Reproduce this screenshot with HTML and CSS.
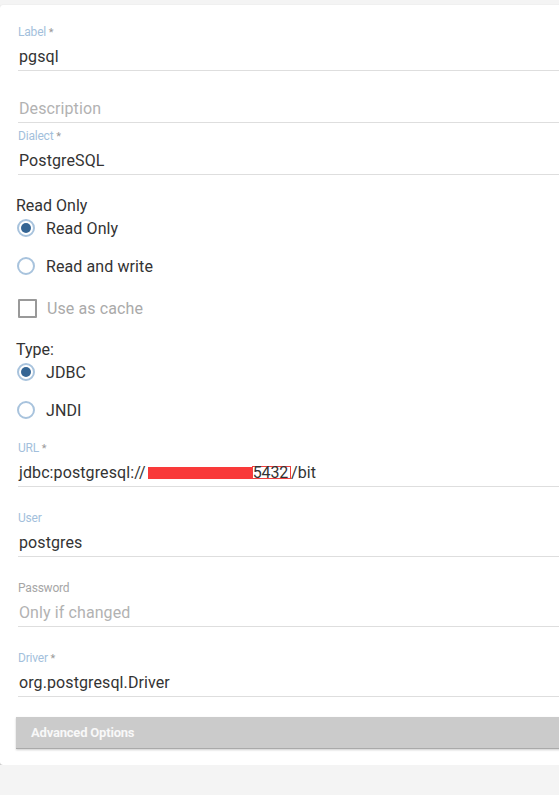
FILE: index.html
```html
<!DOCTYPE html>
<html>
<head>
<meta charset="utf-8">
<link rel="stylesheet" href="styles.css">
</head>
<body>
<div class="card">
  <div class="field">
    <div class="flabel">Label <span class="req">*</span></div>
    <div class="fvalue">pgsql</div>
  </div>
  <div class="field">
    <div class="flabel"></div>
    <div class="fvalue placeholder">Description</div>
  </div>
  <div class="field">
    <div class="flabel">Dialect <span class="req">*</span></div>
    <div class="fvalue">PostgreSQL</div>
  </div>

  <div class="group first">
    <div class="ghead">Read Only</div>
    <div class="radio-row"><span class="radio checked"></span><span class="rtext">Read Only</span></div>
    <div class="radio-row"><span class="radio"></span><span class="rtext">Read and write</span></div>
  </div>
  <div class="check-row"><span class="checkbox"></span><span class="ctext">Use as cache</span></div>

  <div class="group second">
    <div class="ghead">Type:</div>
    <div class="radio-row"><span class="radio checked"></span><span class="rtext">JDBC</span></div>
    <div class="radio-row"><span class="radio"></span><span class="rtext">JNDI</span></div>
  </div>

  <div class="field spaced url">
    <div class="flabel">URL <span class="req">*</span></div>
    <div class="fvalue">jdbc:postgresql://<span class="redact"></span><span class="port">5432</span>/bit</div>
  </div>
  <div class="field spaced">
    <div class="flabel">User</div>
    <div class="fvalue">postgres</div>
  </div>
  <div class="field spaced">
    <div class="flabel grey">Password</div>
    <div class="fvalue placeholder">Only if changed</div>
  </div>
  <div class="field spaced">
    <div class="flabel">Driver <span class="req">*</span></div>
    <div class="fvalue">org.postgresql.Driver</div>
  </div>

  <div class="advanced">Advanced Options</div>
</div>
</body>
</html>
```
FILE: styles.css
```css
html, body {
  margin: 0;
  padding: 0;
  background: #f4f4f4;
  overflow: hidden;
  font-family: Roboto, "Liberation Sans", sans-serif;
}
.card {
  margin-top: 5px;
  width: 600px;
  background: #fff;
  border-radius: 3px;
  box-shadow: 0 1px 2px rgba(0,0,0,0.35);
  padding: 14px 0 16px 16px;
  box-sizing: border-box;
}
.field {
  margin-left: 2px;
  padding-top: 6px;
  border-bottom: 1px solid #dedede;
}
.field.spaced { margin-top: 18px; }
.field.url { margin-top: 13px; }
.flabel {
  height: 14px;
  line-height: 14px;
  font-size: 12px;
  color: #a3bfdc;
  margin-bottom: 4px;
  letter-spacing: -0.2px;
}
.flabel.grey { color: #a6a6a6; }
.req { color: #9a9a9a; font-size: 11px; }
.fvalue {
  height: 27px;
  line-height: 27px;
  font-size: 16px;
  color: #333;
  padding-left: 1px;
  letter-spacing: 0.1px;
}
.fvalue.placeholder { color: #b2b2b2; }
.redact {
  display: inline-block;
  width: 104px;
  height: 12px;
  background: #f93a3a;
  vertical-align: -1px;
  margin-left: 2px;
}
.port {
  display: inline-block;
  border: 1px solid #f04040;
  line-height: 12px;
  height: 11px;
  padding-right: 2px;
  letter-spacing: -0.2px;
}
.group.first { margin-top: 21px; }
.group.second { margin-top: 20px; }
.ghead {
  height: 20px;
  line-height: 20px;
  font-size: 16px;
  color: #333;
}
.radio-row {
  display: flex;
  align-items: center;
  height: 24px;
  margin-bottom: 14px;
}
.radio-row:last-child { margin-bottom: 0; }
.radio {
  width: 14px;
  height: 14px;
  border: 2px solid #a8c3dd;
  border-radius: 50%;
  margin-left: 1px;
  position: relative;
  flex: none;
}
.radio.checked::after {
  content: "";
  position: absolute;
  left: 2px;
  top: 2px;
  width: 10px;
  height: 10px;
  border-radius: 50%;
  background: #346594;
}
.rtext {
  margin-left: 11px;
  font-size: 16px;
  color: #333;
  letter-spacing: 0.1px;
}
.check-row {
  display: flex;
  align-items: center;
  height: 24px;
  margin-top: 18px;
}
.checkbox {
  width: 15px;
  height: 15px;
  border: 2px solid #999;
  margin-left: 2px;
  border-radius: 1px;
  flex: none;
}
.ctext {
  margin-left: 10px;
  font-size: 16px;
  color: #aaa;
  letter-spacing: 0.1px;
}
.advanced {
  margin-top: 20px;
  height: 31px;
  line-height: 32px;
  background: #cbcbcb;
  border-bottom: 1px solid #aaa;
  box-shadow: 0 1px 2px rgba(0,0,0,0.2);
  color: #f8f8f8;
  font-weight: bold;
  font-size: 13px;
  padding-left: 15px;
  letter-spacing: -0.2px;
}
```
